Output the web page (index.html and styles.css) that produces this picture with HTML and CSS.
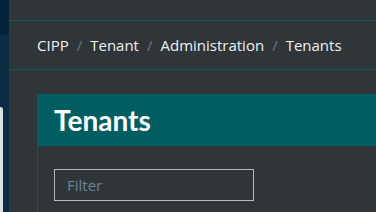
FILE: index.html
```html
<!DOCTYPE html>
<html>
<head>
<meta charset="utf-8">
<link rel="stylesheet" href="styles.css">
</head>
<body>
<div class="app">
  <aside class="sidebar">
    <div class="sidebar-top"></div>
    <div class="sidebar-body"><div class="sidebar-tab"></div></div>
  </aside>
  <main class="main">
    <header class="topbar"></header>
    <nav class="crumbs">
      <span class="crumb">CIPP</span><span class="sep">/</span>
      <span class="crumb">Tenant</span><span class="sep">/</span>
      <span class="crumb">Administration</span><span class="sep">/</span>
      <span class="crumb">Tenants</span>
    </nav>
    <section class="content">
      <div class="card">
        <div class="card-header"><h1 class="card-title">Tenants</h1></div>
        <div class="card-body">
          <input class="filter" type="text" placeholder="Filter">
        </div>
      </div>
    </section>
  </main>
</div>
</body>
</html>
```
FILE: styles.css
```css
html, body {
  margin: 0;
  padding: 0;
  height: 100%;
  background: #2f3538;
  font-family: "Open Sans", "Noto Sans", sans-serif;
  overflow: hidden;
}
.app {
  display: flex;
  height: 212px;
}
.sidebar {
  width: 9px;
  flex: none;
  display: flex;
  flex-direction: column;
}
.sidebar-top {
  height: 35px;
  background: #04223a;
}
.sidebar-body {
  flex: 1;
  background: #0b2c42;
  padding-top: 72px;
  display: flex;
  flex-direction: column;
}
.sidebar-tab {
  flex: 1;
  width: 3px;
  background: #dbe2e7;
  border-top-right-radius: 3px;
}
.main {
  flex: 1;
  min-width: 0;
  overflow: hidden;
}
.topbar {
  height: 20px;
  border-bottom: 1px solid #0a5a5f;
}
.crumbs {
  height: 48px;
  border-bottom: 1px solid #0a5a5f;
  display: flex;
  align-items: center;
  padding-left: 28px;
  font-size: 15px;
  color: #eef2f4;
  white-space: nowrap;
}
.sep {
  color: #6b7785;
  margin: 0 8px;
}
.content {
  padding: 24px 0 0 28px;
}
.card {
  width: 400px;
  border-left: 1px solid #0a5a5f;
}
.card-header {
  height: 52px;
  background: #005e63;
  display: flex;
  align-items: center;
  padding-left: 16px;
}
.card-title {
  margin: 0;
  font-family: "Lato", "Open Sans", sans-serif;
  font-size: 28px;
  font-weight: 700;
  color: #ffffff;
  line-height: 1;
}
.card-body {
  padding: 23px 16px;
}
.filter {
  box-sizing: border-box;
  width: 200px;
  height: 32px;
  background: transparent;
  border: 1px solid #b4bcc2;
  border-radius: 0;
  padding: 0 12px;
  font-family: inherit;
  font-size: 15px;
  color: #e0e6ea;
  outline: none;
}
.filter::placeholder {
  color: #6f8194;
}
```
